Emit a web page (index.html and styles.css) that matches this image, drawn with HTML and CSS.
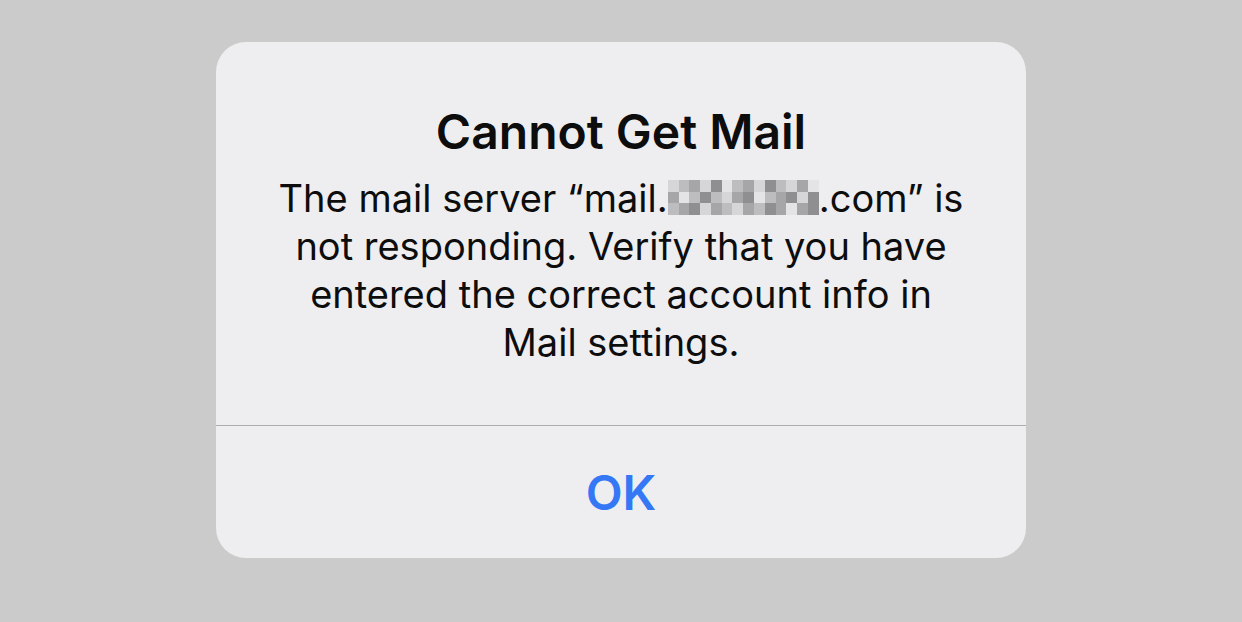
FILE: index.html
```html
<!DOCTYPE html>
<html>
<head>
<meta charset="utf-8">
<link rel="stylesheet" href="styles.css">
</head>
<body>
<div class="stage">
  <div class="alert">
    <div class="content">
      <h1 class="title">Cannot Get Mail</h1>
      <p class="message">The mail server “mail.<span class="mosaic"><i class="c1"></i><i class="c2"></i><i class="c3"></i><i class="c1"></i><i class="c4"></i><i class="c5"></i><i class="c2"></i><i class="c3"></i><i class="c1"></i><i class="c4"></i><i class="c2"></i><i class="c1"></i><i class="c3"></i><i class="c5"></i><i class="c3"></i><i class="c5"></i><i class="c2"></i><i class="c4"></i><i class="c2"></i><i class="c1"></i><i class="c3"></i><i class="c4"></i><i class="c5"></i><i class="c2"></i><i class="c3"></i><i class="c4"></i><i class="c1"></i><i class="c4"></i><i class="c2"></i><i class="c3"></i><i class="c4"></i><i class="c1"></i><i class="c3"></i><i class="c2"></i><i class="c1"></i><i class="c3"></i><i class="c2"></i><i class="c4"></i><i class="c3"></i><i class="c5"></i><i class="c3"></i><i class="c4"></i></span>.com” is<br>not responding. Verify that you have<br>entered the correct account info in<br>Mail settings.</p>
    </div>
    <div class="actions">
      <button class="ok">OK</button>
    </div>
  </div>
</div>
</body>
</html>
```
FILE: styles.css
```css
html, body {
  margin: 0;
  padding: 0;
  background: #cbcbcb;
  height: 100%;
}
.stage {
  display: flex;
  justify-content: center;
  padding-top: 42px;
}
.alert {
  width: 810px;
  height: 516px;
  background: #eeeef0;
  border-radius: 30px;
  display: flex;
  flex-direction: column;
  overflow: hidden;
  font-family: Inter, "Liberation Sans", sans-serif;
  color: #0d0d0d;
}
.content {
  height: 383px;
  border-bottom: 1px solid #adadaf;
  display: flex;
  flex-direction: column;
  align-items: center;
}
.title {
  margin: 0;
  margin-top: 64px;
  font-size: 48px;
  font-weight: 600;
  line-height: 52px;
  white-space: nowrap;
}
.message {
  margin: 16px 0 0;
  font-size: 38px;
  line-height: 48px;
  font-weight: 400;
  text-align: center;
  white-space: nowrap;
}
.mosaic {
  display: inline-block;
  width: 151px;
  height: 35px;
  overflow: hidden;
  vertical-align: -3px;
  line-height: 0;
  white-space: normal;
}
.mosaic i {
  display: inline-block;
  width: 10.78px;
  height: 11.66px;
  vertical-align: top;
}
.mosaic .c1 { background: #d6d6d8; }
.mosaic .c2 { background: #bdbdbf; }
.mosaic .c3 { background: #a6a6a8; }
.mosaic .c4 { background: #8f8f91; }
.mosaic .c5 { background: #e4e4e6; }
.actions {
  flex: 1;
  display: flex;
  align-items: center;
  justify-content: center;
}
.ok {
  border: 0;
  background: none;
  font-family: Inter, "Liberation Sans", sans-serif;
  font-size: 48px;
  font-weight: 600;
  line-height: 58px;
  color: #3478f6;
  padding: 0;
  margin-top: 2px;
}
```
